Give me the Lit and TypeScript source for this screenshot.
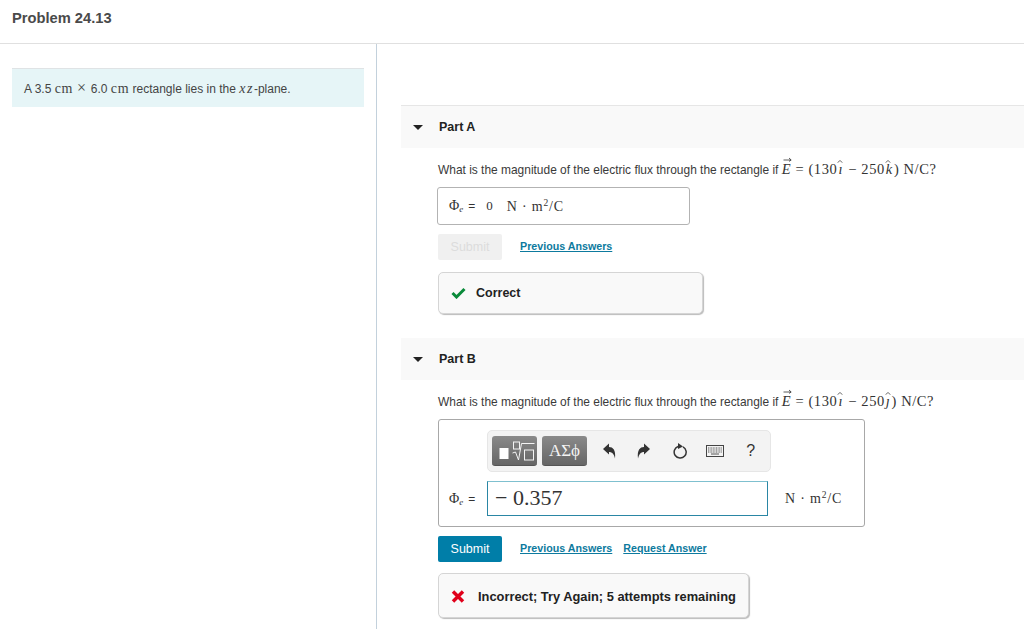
import { LitElement, html, css } from "lit";
import { customElement } from "lit/decorators.js";

const vecE = html`<span class="vec"><i>E</i><svg class="arrow" width="9" height="5" viewBox="0 0 9 5"><path d="M0.5 3H8M6 1l2.200 2L6 4.400" fill="none" stroke="#333" stroke-width="0.8"/></svg></span>`;

// MathJax style unit vector: letter with a small hat drawn over it
const unit = (c: string) => html`<span class="vec hatted"><i>${c}</i><svg class="hat" width="6" height="3" viewBox="0 0 6 3"><path d="M0.500 2.700L3 .5l2.500 2.200" fill="none" stroke="#333" stroke-width="0.7"/></svg></span>`;

const units = html`<span class="units">N · m<span class="sup">2</span>/C</span>`;
const flux = html`<span>Φ<span class="sub">e</span><span class="eq">=</span></span>`;

@customElement("app-root")
export class AppRoot extends LitElement {
  static styles = css`
    :host {
      display: block;
      height: 629px;
      overflow: hidden;
      background: #fff;
      font-family: "Liberation Sans", Arial, sans-serif;
      color: #333;
    }

    .title {
      height: 43px;
      border-bottom: 1px solid #e0e0e0;
      padding-left: 12px;
      font-size: 14.7px;
      font-weight: 700;
      line-height: 36px;
      color: #4a4a4a;
    }

    .columns {
      display: flex;
      height: 585px;
    }

    .left {
      width: 377px;
      flex: none;
      box-sizing: border-box;
      border-right: 1px solid #c3d1dc;
      padding: 24px 12px 0;
    }

    .intro {
      height: 39px;
      box-sizing: border-box;
      border-top: 1px solid #dfe3e5;
      background: #e6f5f7;
      padding-left: 12px;
      font-size: 12px;
      line-height: 38px;
      color: #444;
      white-space: nowrap;
    }

    .intro .m {
      font-size: 14px;
      letter-spacing: 0.6px;
    }

    .intro .times {
      font-size: 16px;
    }

    .intro .xz {
      letter-spacing: 1.500px;
    }

    .m {
      font-family: "Liberation Serif", serif;
    }

    .right {
      flex: 1;
      min-width: 0;
      padding: 61px 0 0 24px;
    }

    .part-head {
      height: 42px;
      display: flex;
      align-items: center;
      background: #f9f9f9;
      font-size: 12.500px;
      font-weight: 700;
      color: #222;
    }

    .part-head.first {
      border-top: 1px solid #e6e6e6;
    }

    .tri {
      width: 0;
      height: 0;
      margin: 0 16px 0 12px;
      border-left: 5.500px solid transparent;
      border-right: 5.500px solid transparent;
      border-top: 5.500px solid #222;
    }

    .body {
      padding-left: 36px;
    }

    .question {
      height: 20px;
      margin-top: 11px;
      padding-left: 1px;
      line-height: 20px;
      font-size: 11.950px;
      color: #3a3a3a;
      white-space: nowrap;
    }

    .question .m {
      font-size: 14.500px;
      letter-spacing: 0.6px;
      color: #333;
    }

    .vec {
      position: relative;
      display: inline-block;
    }

    .hatted {
      margin: 0 1px;
    }

    .arrow {
      position: absolute;
      left: 1px;
      top: -2px;
    }

    .hat {
      position: absolute;
      left: -1px;
      top: 1px;
    }

    .answer {
      width: 253px;
      height: 38px;
      margin-top: 8px;
      box-sizing: border-box;
      border: 1px solid #b3b3b3;
      border-radius: 3px;
      display: flex;
      align-items: center;
      padding-left: 11px;
      font-size: 14px;
      white-space: nowrap;
    }

    .units {
      letter-spacing: 0.8px;
    }

    .value {
      margin: 0 14px 0 11px;
      font-size: 13px;
    }

    .sub {
      font-size: 9px;
      font-style: italic;
      vertical-align: -2px;
    }

    .sup {
      font-size: 9.500px;
      vertical-align: 5px;
    }

    .eq {
      font-family: "Liberation Sans", sans-serif;
      font-size: 12px;
      margin-left: 5px;
    }

    .actions {
      display: flex;
      align-items: center;
      margin-top: 9px;
      padding-left: 1px;
      height: 26px;
    }

    .submit {
      width: 64px;
      height: 26px;
      border-radius: 2px;
      background: #007ea8;
      color: #fff;
      font-size: 12.500px;
      line-height: 26px;
      text-align: center;
      margin-right: 18px;
    }

    .submit.off {
      background: #f0f0f0;
      color: #dcdcdc;
    }

    .link {
      color: #0d7a9e;
      font-size: 10.700px;
      font-weight: 700;
      text-decoration: underline;
      margin-right: 11px;
      padding-bottom: 2px;
      white-space: nowrap;
    }

    .feedback {
      display: flex;
      align-items: center;
      box-sizing: border-box;
      margin-left: 1px;
      background: #f9f9f9;
      border: 1px solid #d5d5d5;
      border-radius: 5px;
      box-shadow: 1px 1px 1px #bbb;
      font-weight: 700;
      color: #222;
    }

    .feedback.ok {
      width: 265px;
      height: 42px;
      margin-top: 12px;
      margin-bottom: 24px;
      padding-left: 12px;
      gap: 10px;
      font-size: 12.500px;
    }

    .feedback.bad {
      width: 311px;
      height: 45px;
      margin-top: 11px;
      padding: 1px 0 0 12px;
      gap: 13px;
      font-size: 12.850px;
    }

    .editor {
      width: 427px;
      height: 108px;
      margin: 8px 0 0 1px;
      box-sizing: border-box;
      border: 1px solid #a8a8a8;
      border-radius: 3px;
      padding: 10px 0 0 48px;
    }

    .toolbar {
      width: 284px;
      height: 42px;
      box-sizing: border-box;
      display: flex;
      align-items: center;
      padding-left: 4px;
      background: #f3f3f3;
      border: 1px solid #e6e6e6;
      border-radius: 5px;
    }

    .tool {
      width: 45px;
      height: 30px;
      box-sizing: border-box;
      margin-right: 5px;
      border-radius: 3px;
      background: linear-gradient(#8a8a8a, #666);
      border-bottom: 1px solid #555;
      display: flex;
      align-items: center;
      justify-content: center;
      color: #f4f4f4;
      font-family: "Liberation Serif", serif;
      font-size: 17px;
    }

    .tool.last {
      margin-right: 4px;
    }

    .icon {
      width: 35.500px;
      flex: none;
      display: flex;
      justify-content: center;
      align-items: center;
      color: #333;
      font-size: 16px;
    }

    .input-row {
      display: flex;
      align-items: center;
      margin: 9px 0 0 -38px;
    }

    .label {
      width: 38px;
      font-size: 14px;
      color: #333;
      white-space: nowrap;
    }

    .input {
      width: 281px;
      height: 35px;
      box-sizing: border-box;
      border: 1px solid #2a86a4;
      border-top-color: #7fc0cf;
      padding-left: 7px;
      font-family: "Liberation Serif", serif;
      font-size: 22px;
      line-height: 32px;
      color: #333;
    }

    .unit {
      margin-left: 17px;
      font-size: 14px;
      white-space: nowrap;
    }
  `;

  private question(hatted: string) {
    return html`<div class="question">
      What is the magnitude of the electric flux through the rectangle if
      <span class="m">${vecE} = (130${unit("ı")} − 250${unit(hatted)}) N/C?</span>
    </div>`;
  }

  render() {
    return html`
      <div class="title">Problem 24.13</div>
      <div class="columns">
        <div class="left">
          <div class="intro">
            A 3.5 <span class="m">cm <span class="times">×</span> </span>6.0
            <span class="m">cm</span>
            rectangle lies in the <span class="m xz"><i>xz</i></span>-plane.
          </div>
        </div>
        <div class="right">
          <div class="part-head first"><span class="tri"></span>Part A</div>
          <div class="body">
            ${this.question("k")}
            <div class="answer m">
              ${flux}
              <span class="value">0</span>
              ${units}
            </div>
            <div class="actions">
              <div class="submit off">Submit</div>
              <span class="link">Previous Answers</span>
            </div>
            <div class="feedback ok">
              <svg width="15" height="12" viewBox="0 0 15 12">
                <path d="M1.500 6l4 4L13.500 2" fill="none" stroke="#0a8a3a" stroke-width="3"/>
              </svg>
              Correct
            </div>
          </div>
          <div class="part-head"><span class="tri"></span>Part B</div>
          <div class="body">
            ${this.question("ȷ")}
            <div class="editor">
              <div class="toolbar">
                <div class="tool">
                  <svg width="44" height="28" viewBox="0 0 44 28">
                    <rect x="6.500" y="11" width="9" height="11" fill="#fff"/>
                    <path d="M19.500 16l3-1 3 8 3-16.500h13" fill="none" stroke="#f4f4f4"/>
                    <rect x="20.500" y="5" width="6" height="7" fill="none" stroke="#f4f4f4"/>
                    <rect x="31.500" y="13" width="9" height="10" fill="none" stroke="#f4f4f4"/>
                  </svg>
                </div>
                <div class="tool last">ΑΣϕ</div>
                <div class="icon">
                  <svg width="14" height="16" viewBox="0 0 14 16">
                    <path d="M1 6l6-5.500V4c4 0 7 3 6 11.500C12 11 10 9 7 9v2.500z" fill="#333"/>
                  </svg>
                </div>
                <div class="icon">
                  <svg width="14" height="16" viewBox="0 0 14 16">
                    <path d="M13 6L7 .5V4C3 4 0 7 1 15.500 2 11 4 9 7 9v2.500z" fill="#333"/>
                  </svg>
                </div>
                <div class="icon">
                  <svg width="16" height="16" viewBox="0 0 16 16">
                    <path d="M6 3.500A6 6 0 1 0 11 3.800" fill="none" stroke="#333" stroke-width="1.500"/>
                    <path d="M6 0l5 3.500-5 2.500z" fill="#333"/>
                  </svg>
                </div>
                <div class="icon">
                  <svg width="18" height="12" viewBox="0 0 18 12">
                    <rect x="0.500" y="0.500" width="17" height="11" fill="#f3f3f3" stroke="#444"/>
                    <path d="M2 3h14M2 5h14M2 7h14" stroke="#555" stroke-dasharray="1 .6"/>
                    <path d="M5 9h8" stroke="#555"/>
                  </svg>
                </div>
                <div class="icon">?</div>
              </div>
              <div class="input-row">
                <span class="label m">${flux}</span>
                <div class="input">− 0.357</div>
                <span class="unit m">${units}</span>
              </div>
            </div>
            <div class="actions">
              <div class="submit">Submit</div>
              <span class="link">Previous Answers</span>
              <span class="link">Request Answer</span>
            </div>
            <div class="feedback bad">
              <svg width="14" height="13" viewBox="0 0 14 13">
                <path d="M2 1.500l10 10M12 1.500l-10 10" fill="none" stroke="#e0001b" stroke-width="3.500"/>
              </svg>
              Incorrect; Try Again; 5 attempts remaining
            </div>
          </div>
        </div>
      </div>
    `;
  }
}

declare global {
  interface HTMLElementTagNameMap {
    "app-root": AppRoot;
  }
}
